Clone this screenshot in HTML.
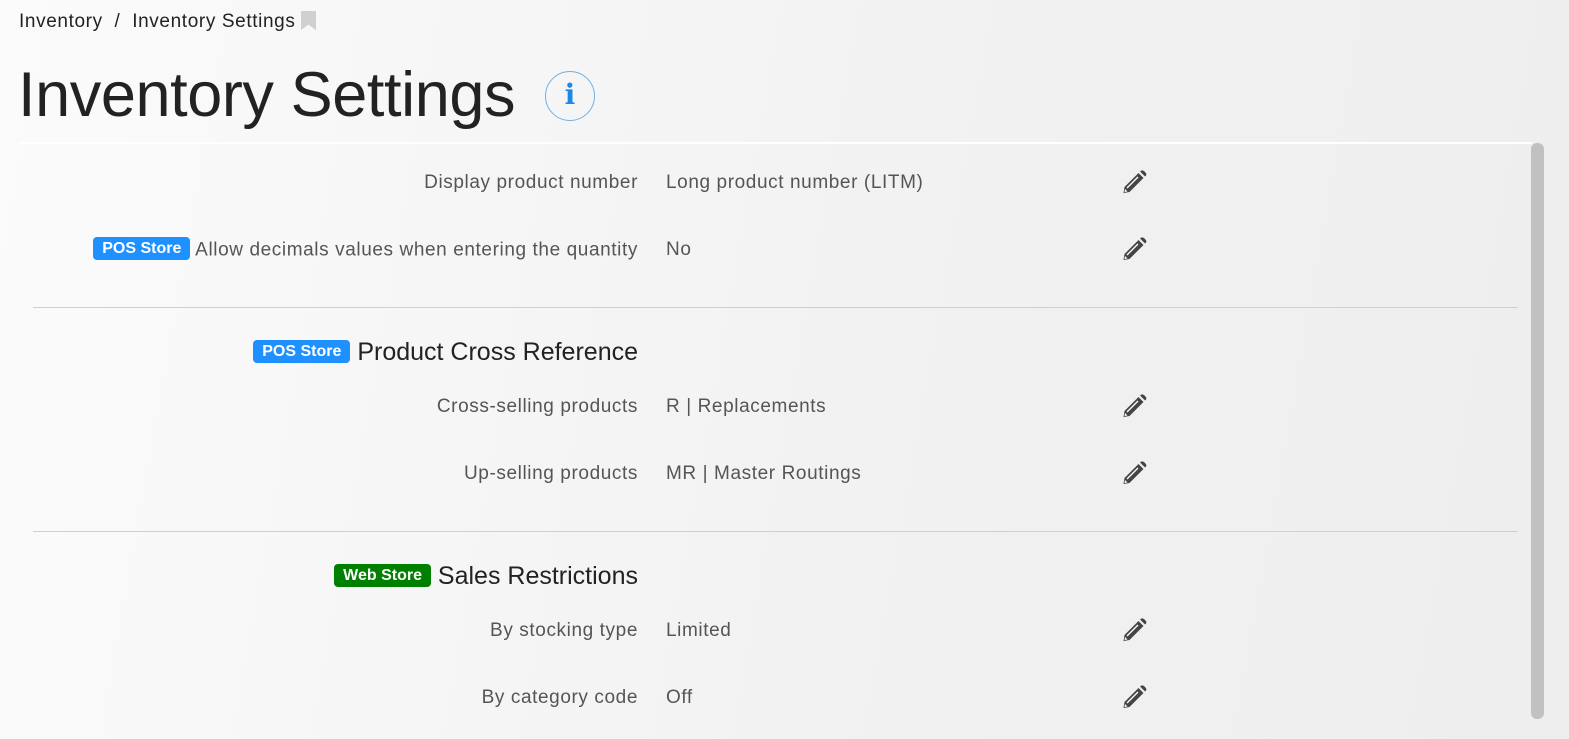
<!DOCTYPE html>
<html><head><meta charset="utf-8"><style>
*{margin:0;padding:0;box-sizing:border-box}
html,body{width:1569px;height:739px;overflow:hidden}
body{background:linear-gradient(100deg,#fbfbfb,#f1f1f1 60%,#eeeeee);font-family:"Liberation Sans",sans-serif;color:#222;position:relative}
.bc{position:absolute;left:19px;top:11px;font-size:19px;color:#222;letter-spacing:0.62px}
.bm{position:absolute;left:301px;top:11px;width:15px;height:19px;background:#d0d0d0;clip-path:polygon(0 0,100% 0,100% 100%,50% 72%,0 100%)}
h1{position:absolute;left:18px;top:59px;font-size:63px;font-weight:normal;color:#222;letter-spacing:-0.4px}
.info{position:absolute;left:545px;top:71px;width:50px;height:50px;border:1px solid #6db3e6;border-radius:50%;color:#1e88e5;font-weight:bold;font-size:28px;text-align:center;line-height:46px;font-family:"DejaVu Serif",serif}
.topline{position:absolute;left:19px;top:142px;width:1513px;height:2px;background:#fff}
.sb{position:absolute;left:1531px;top:143px;width:13px;height:576px;background:#c1c1c1;border-radius:6px}
.lab{position:absolute;right:931px;font-size:19px;color:#555;white-space:nowrap;text-align:right;letter-spacing:0.6px}
.val{position:absolute;left:666px;font-size:19px;color:#555;letter-spacing:0.6px}
.hd{position:absolute;right:931px;font-size:25px;color:#222;white-space:nowrap}
.tag{display:inline-block;color:#fff;font-size:16px;font-weight:bold;padding:0 9px;border-radius:4px;line-height:23px;vertical-align:middle;position:relative;top:-2px;letter-spacing:0}
.pos{background:#1e90ff}.web{background:#008000}
.div{position:absolute;left:33px;width:1485px;height:1px;background:#cfcfcf}
.pen{position:absolute;left:1122px;width:26px;height:24px}
</style></head><body>
<div class="bc">Inventory &nbsp;/&nbsp; Inventory Settings</div><div class="bm"></div>
<h1>Inventory Settings</h1>
<div class="info">i</div>
<div class="topline"></div>
<div class="sb"></div>

<div class="lab" style="top:172px">Display product number</div>
<div class="val" style="top:172px">Long product number (LITM)</div>
<div class="lab" style="top:239px"><span class="tag pos">POS Store</span> Allow decimals values when entering the quantity</div>
<div class="val" style="top:239px">No</div>
<div class="div" style="top:307px"></div>
<div class="hd" style="top:338px"><span class="tag pos">POS Store</span> Product Cross Reference</div>
<div class="lab" style="top:396px">Cross-selling products</div>
<div class="val" style="top:396px">R | Replacements</div>
<div class="lab" style="top:463px">Up-selling products</div>
<div class="val" style="top:463px">MR | Master Routings</div>
<div class="div" style="top:531px"></div>
<div class="hd" style="top:562px"><span class="tag web">Web Store</span> Sales Restrictions</div>
<div class="lab" style="top:620px">By stocking type</div>
<div class="val" style="top:620px">Limited</div>
<div class="lab" style="top:687px">By category code</div>
<div class="val" style="top:687px">Off</div>

<svg width="0" height="0" style="position:absolute"><defs><g id="p"><path d="M1.5 23 L2.5 17 L16.5 3 L21.5 8 L7.5 22 Z" fill="#444"/><path d="M18 1.5 L19.5 0.5 Q21 0 23 2 Q25 4 24 5.5 L23 6.5 Z" fill="#444"/><path d="M5 18 L16 7" stroke="#fff" stroke-width="1.3"/><path d="M3 19 L5.5 21.5 L2.5 22 Z" fill="#fff"/></g></defs></svg>
<svg class="pen" style="top:170px" viewBox="0 0 26 24"><use href="#p"/></svg>
<svg class="pen" style="top:237px" viewBox="0 0 26 24"><use href="#p"/></svg>
<svg class="pen" style="top:394px" viewBox="0 0 26 24"><use href="#p"/></svg>
<svg class="pen" style="top:461px" viewBox="0 0 26 24"><use href="#p"/></svg>
<svg class="pen" style="top:618px" viewBox="0 0 26 24"><use href="#p"/></svg>
<svg class="pen" style="top:685px" viewBox="0 0 26 24"><use href="#p"/></svg>
</body></html>
